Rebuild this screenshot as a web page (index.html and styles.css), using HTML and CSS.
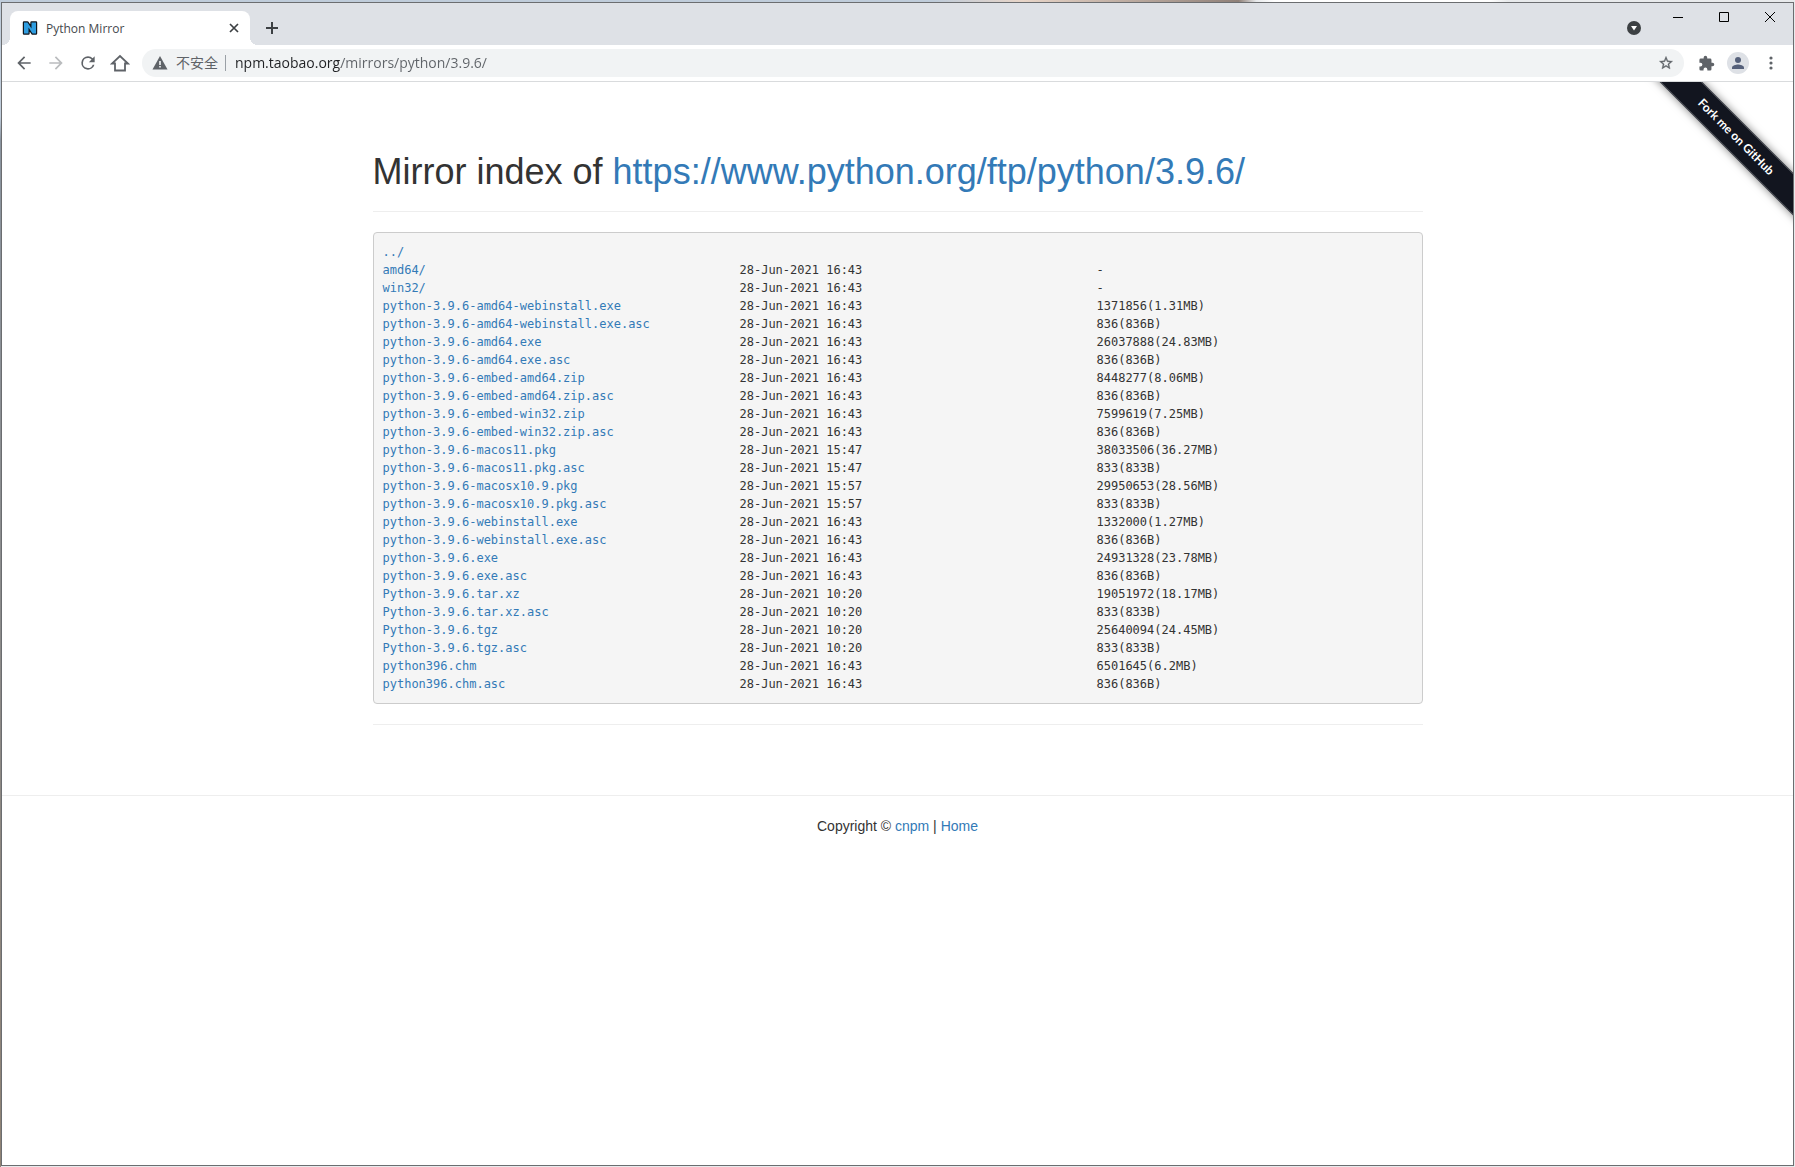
FILE: index.html
```html
<!DOCTYPE html>
<html lang="en">
<head>
    <meta charset="UTF-8">
    <meta name="viewport" content="width=device-width, initial-scale=1.0">
    <title>Python Mirror</title>
    <link rel="stylesheet" href="styles.css">
</head>
<body>
    <div class="window">
        <div class="tab-strip">
            <div class="tab">
                <svg class="favicon" width="16" height="16" viewBox="0 0 16 16">
                    <path d="M2 2.5h3.5l4 6V2.5H14v11h-3.500l-4-6v6H2z" fill="#2f9de0" stroke="#10151c" stroke-width="2.400" stroke-linejoin="round" paint-order="stroke"/>
                </svg>
                <span class="tab-title">Python Mirror</span>
                <button class="icon-button tab-close" aria-label="Close tab">
                    <svg width="16" height="16" viewBox="0 0 16 16"><path d="M4 4l8 8M12 4l-8 8" stroke="#3c4043" stroke-width="1.700"/></svg>
                </button>
            </div>
            <button class="icon-button new-tab" aria-label="New tab">
                <svg width="16" height="16" viewBox="0 0 16 16"><path d="M8 2v12M2 8h12" stroke="#3c4043" stroke-width="2"/></svg>
            </button>
            <button class="icon-button tab-search" aria-label="Search tabs">
                <svg width="14" height="14" viewBox="0 0 14 14"><circle cx="7" cy="7" r="7" fill="#3c4043"/><path d="M4 5h6l-3 4.500z" fill="#fff"/></svg>
            </button>
            <div class="window-controls">
                <button class="icon-button" aria-label="Minimize">
                    <svg width="10" height="10" viewBox="0 0 10 10"><path d="M0 5.500h10" stroke="#000"/></svg>
                </button>
                <button class="icon-button" aria-label="Maximize">
                    <svg width="10" height="10" viewBox="0 0 10 10"><path d="M.5.5h9v9h-9z" fill="none" stroke="#000"/></svg>
                </button>
                <button class="icon-button" aria-label="Close">
                    <svg width="10" height="10" viewBox="0 0 10 10"><path d="M0 0l10 10M10 0L0 10" stroke="#000"/></svg>
                </button>
            </div>
        </div>

        <div class="toolbar">
            <button class="icon-button nav-button" aria-label="Back">
                <svg width="20" height="20" viewBox="0 0 24 24"><path d="M20 11H7.830l5.590-5.590L12 4l-8 8 8 8 1.410-1.410L7.830 13H20z" fill="#5f6368"/></svg>
            </button>
            <button class="icon-button nav-button" aria-label="Forward" disabled>
                <svg width="20" height="20" viewBox="0 0 24 24"><path d="M12 4l-1.410 1.410L16.170 11H4v2h12.170l-5.580 5.590L12 20l8-8z" fill="#babcbe"/></svg>
            </button>
            <button class="icon-button nav-button" aria-label="Reload">
                <svg width="20" height="20" viewBox="0 0 24 24"><path d="M17.650 6.350A7.960 7.960 0 0 0 12 4a8 8 0 1 0 7.730 10h-2.080A6 6 0 1 1 12 6c1.660 0 3.140.69 4.220 1.780L13 11h7V4z" fill="#5f6368"/></svg>
            </button>
            <button class="icon-button nav-button" aria-label="Home">
                <svg width="20" height="20" viewBox="0 0 20 20"><path d="M2 10.500h3v7h10v-7h3L10 3z" fill="none" stroke="#5f6368" stroke-width="1.800"/></svg>
            </button>
            <div class="address-bar">
                <svg width="16" height="16" viewBox="0 0 16 16"><path d="M8 1L.5 14.500h15z" fill="#5f6368"/><path d="M7.200 6h1.600v4H7.200zM7.200 11h1.600v1.600H7.200z" fill="#f1f3f4"/></svg>
                <label class="security" for="url">不安全</label>
                <input class="url" id="url" type="text" value="npm.taobao.org/mirrors/python/3.9.6/" spellcheck="false">
                <button class="icon-button" aria-label="Bookmark this tab">
                    <svg width="16" height="16" viewBox="0 0 24 24"><path d="M22 9.240l-7.190-.62L12 2 9.190 8.630 2 9.240l5.460 4.730L5.820 21 12 17.270 18.180 21l-1.630-7.030zM12 15.400l-3.760 2.270 1-4.280-3.320-2.880 4.380-.38L12 6.100l1.710 4.040 4.380.38-3.320 2.880 1 4.280z" fill="#5f6368" stroke="#5f6368" stroke-width=".5"/></svg>
                </button>
            </div>
            <button class="icon-button extensions" aria-label="Extensions">
                <svg width="17" height="17" viewBox="0 0 24 24"><path d="M20.500 11H19V7a2 2 0 0 0-2-2h-4V3.500a2.500 2.500 0 0 0-5 0V5H4a2 2 0 0 0-2 2v3.800h1.500a2.700 2.700 0 0 1 0 5.400H2V20a2 2 0 0 0 2 2h3.800v-1.500a2.700 2.700 0 0 1 5.400 0V22H17a2 2 0 0 0 2-2v-4h1.500a2.500 2.500 0 0 0 0-5z" fill="#5f6368"/></svg>
            </button>
            <button class="icon-button profile" aria-label="Profile">
                <svg width="22" height="22" viewBox="0 0 22 22"><circle cx="11" cy="8" r="3" fill="#55607a"/><path d="M5 17v-1.500c0-2 4-3 6-3s6 1 6 3V17z" fill="#55607a"/></svg>
            </button>
            <button class="icon-button" aria-label="Menu">
                <svg width="16" height="16" viewBox="0 0 16 16" fill="#5f6368"><circle cx="8" cy="3" r="1.600"/><circle cx="8" cy="8" r="1.600"/><circle cx="8" cy="13" r="1.600"/></svg>
            </button>
        </div>

        <div class="page">
            <div class="ribbon-corner">
                <a class="ribbon" href="#">Fork me on GitHub</a>
            </div>
            <div class="container">
                <h1>Mirror index of <a href="#">https://www.python.org/ftp/python/3.9.6/</a></h1>
                <hr>
                <div class="listing">
                    <table>
                        <tr><td><a href="#">../</a></td><td></td><td></td></tr>
                        <tr><td><a href="#">amd64/</a></td><td>28-Jun-2021 16:43</td><td>-</td></tr>
                        <tr><td><a href="#">win32/</a></td><td>28-Jun-2021 16:43</td><td>-</td></tr>
                        <tr><td><a href="#">python-3.9.6-amd64-webinstall.exe</a></td><td>28-Jun-2021 16:43</td><td>1371856(1.31MB)</td></tr>
                        <tr><td><a href="#">python-3.9.6-amd64-webinstall.exe.asc</a></td><td>28-Jun-2021 16:43</td><td>836(836B)</td></tr>
                        <tr><td><a href="#">python-3.9.6-amd64.exe</a></td><td>28-Jun-2021 16:43</td><td>26037888(24.83MB)</td></tr>
                        <tr><td><a href="#">python-3.9.6-amd64.exe.asc</a></td><td>28-Jun-2021 16:43</td><td>836(836B)</td></tr>
                        <tr><td><a href="#">python-3.9.6-embed-amd64.zip</a></td><td>28-Jun-2021 16:43</td><td>8448277(8.06MB)</td></tr>
                        <tr><td><a href="#">python-3.9.6-embed-amd64.zip.asc</a></td><td>28-Jun-2021 16:43</td><td>836(836B)</td></tr>
                        <tr><td><a href="#">python-3.9.6-embed-win32.zip</a></td><td>28-Jun-2021 16:43</td><td>7599619(7.25MB)</td></tr>
                        <tr><td><a href="#">python-3.9.6-embed-win32.zip.asc</a></td><td>28-Jun-2021 16:43</td><td>836(836B)</td></tr>
                        <tr><td><a href="#">python-3.9.6-macos11.pkg</a></td><td>28-Jun-2021 15:47</td><td>38033506(36.27MB)</td></tr>
                        <tr><td><a href="#">python-3.9.6-macos11.pkg.asc</a></td><td>28-Jun-2021 15:47</td><td>833(833B)</td></tr>
                        <tr><td><a href="#">python-3.9.6-macosx10.9.pkg</a></td><td>28-Jun-2021 15:57</td><td>29950653(28.56MB)</td></tr>
                        <tr><td><a href="#">python-3.9.6-macosx10.9.pkg.asc</a></td><td>28-Jun-2021 15:57</td><td>833(833B)</td></tr>
                        <tr><td><a href="#">python-3.9.6-webinstall.exe</a></td><td>28-Jun-2021 16:43</td><td>1332000(1.27MB)</td></tr>
                        <tr><td><a href="#">python-3.9.6-webinstall.exe.asc</a></td><td>28-Jun-2021 16:43</td><td>836(836B)</td></tr>
                        <tr><td><a href="#">python-3.9.6.exe</a></td><td>28-Jun-2021 16:43</td><td>24931328(23.78MB)</td></tr>
                        <tr><td><a href="#">python-3.9.6.exe.asc</a></td><td>28-Jun-2021 16:43</td><td>836(836B)</td></tr>
                        <tr><td><a href="#">Python-3.9.6.tar.xz</a></td><td>28-Jun-2021 10:20</td><td>19051972(18.17MB)</td></tr>
                        <tr><td><a href="#">Python-3.9.6.tar.xz.asc</a></td><td>28-Jun-2021 10:20</td><td>833(833B)</td></tr>
                        <tr><td><a href="#">Python-3.9.6.tgz</a></td><td>28-Jun-2021 10:20</td><td>25640094(24.45MB)</td></tr>
                        <tr><td><a href="#">Python-3.9.6.tgz.asc</a></td><td>28-Jun-2021 10:20</td><td>833(833B)</td></tr>
                        <tr><td><a href="#">python396.chm</a></td><td>28-Jun-2021 16:43</td><td>6501645(6.2MB)</td></tr>
                        <tr><td><a href="#">python396.chm.asc</a></td><td>28-Jun-2021 16:43</td><td>836(836B)</td></tr>
                    </table>
                </div>
                <hr>
            </div>
            <footer>Copyright © <a href="#">cnpm</a> | <a href="#">Home</a></footer>
        </div>
    </div>
</body>
</html>
```

FILE: styles.css
```css
* {
    box-sizing: border-box;
}

/* desktop showing round the window */
body {
    margin: 0;
    height: 100vh;
    padding: 2px 1px 1px;
    display: flex;
    background:
        linear-gradient(90deg, #bfccda 52%, #e8d5c8 57%, #8f8078 69%, #e8eaec 70%, #fff 71%, #fff 83%, #e8eaec 84%) top / 100% 2px no-repeat,
        linear-gradient(#bfccda 10%, #8a949f 12%, #8f8274) left / 1px 100% no-repeat,
        #e8eaec;
    font-family: "Liberation Sans", Arial, sans-serif;
    font-size: 14px;
    line-height: 20px;
    color: #333;
}

a {
    color: #337ab7;
    text-decoration: none;
}

hr {
    width: 100%;
    margin: 20px 0;
    border: 0;
    border-top: 1px solid #eee;
}

.window {
    flex: 1;
    display: flex;
    flex-direction: column;
    border: 1px solid #6b6d70;
    background-color: #fff;
}

.icon-button {
    display: flex;
    align-items: center;
    justify-content: center;
    padding: 0;
    border: none;
    background: none;
}

/* browser tabs */
.tab-strip {
    display: flex;
    height: 42px;
    padding-left: 8px;
    background-color: #dee1e6;
    font-family: "Open Sans", sans-serif;
}

.tab {
    position: relative;
    display: flex;
    align-items: center;
    width: 240px;
    margin-top: 8px;
    padding: 0 8px 0 12px;
    border-radius: 8px 8px 0 0;
    background-color: #fff;
}

.tab::before,
.tab::after {
    content: "";
    position: absolute;
    bottom: 0;
    width: 8px;
    height: 8px;
}

.tab::before {
    left: -8px;
    background: radial-gradient(circle at 0 0, #dee1e6 8px, #fff 8px);
}

.tab::after {
    right: -8px;
    background: radial-gradient(circle at 100% 0, #dee1e6 8px, #fff 8px);
}

.tab-title {
    flex: 1;
    margin-left: 8px;
    padding-top: 2px;
    font-size: 12px;
    color: #45494d;
}

.new-tab {
    width: 28px;
    margin: 8px 0 0 8px;
}

.tab-search {
    margin: 8px 14px 0 auto;
}

.window-controls {
    display: flex;
    height: 28px;
}

.window-controls .icon-button {
    width: 46px;
}

/* toolbar */
.toolbar {
    display: flex;
    align-items: center;
    height: 37px;
    padding: 0 14px 0 6px;
    border-bottom: 1px solid #d9dbdd;
}

.nav-button {
    width: 32px;
    height: 32px;
}

.address-bar {
    flex: 1;
    display: flex;
    align-items: center;
    height: 28px;
    margin-left: 6px;
    padding: 0 10px;
    border-radius: 14px;
    background-color: #f1f3f4;
    font-family: "Open Sans", "Noto Sans CJK SC", sans-serif;
}

.security {
    margin: 0 9px 0 8px;
    padding-right: 7px;
    border-right: 1px solid #9aa0a6;
    line-height: 16px;
    color: #5f6368;
}

/* the host name is darker than the path */
.url {
    flex: 1;
    padding: 0;
    border: none;
    outline: none;
    font: inherit;
    font-size: 14px;
    color: #202124;
    background: linear-gradient(90deg, #202124 106px, #5f6368 106px);
    -webkit-background-clip: text;
    background-clip: text;
    -webkit-text-fill-color: transparent;
}

.extensions {
    margin: 0 12px 0 14px;
}

.profile {
    margin-right: 14px;
    border-radius: 50%;
    background-color: #dee1e6;
}

/* page */
.page {
    position: relative;
    flex: 1;
    padding-top: 71px;
}

.container {
    max-width: 1080px;
    margin: 0 auto;
    padding: 0 15px;
}

h1 {
    margin: 0;
    font-size: 36px;
    font-weight: 500;
    line-height: 38px;
}

.listing {
    padding: 10px 9px;
    border: 1px solid #ccc;
    border-radius: 4px;
    background-color: #f5f5f5;
}

table {
    width: 100%;
    table-layout: fixed;
    border-collapse: collapse;
    font-family: "DejaVu Sans Mono", monospace;
    font-size: 12px;
    line-height: 18px;
}

td {
    height: 18px;
    padding: 0;
}

td:nth-child(1),
td:nth-child(2) {
    width: 357px;
}

footer {
    margin-top: 70px;
    padding-top: 20px;
    border-top: 1px solid #eee;
    text-align: center;
}

.ribbon-corner {
    position: absolute;
    top: 0;
    right: 0;
    width: 150px;
    height: 150px;
    overflow: hidden;
}

.ribbon {
    position: absolute;
    top: 40px;
    right: -50px;
    width: 214px;
    padding: 4px 0;
    border: 1px solid #55585f;
    background-color: #12151f;
    box-shadow: 0 0 8px rgba(0, 0, 0, 0.5);
    font-family: Lato, sans-serif;
    font-size: 12px;
    font-weight: 700;
    text-align: center;
    color: #fff;
    transform: rotate(45deg);
}
```
